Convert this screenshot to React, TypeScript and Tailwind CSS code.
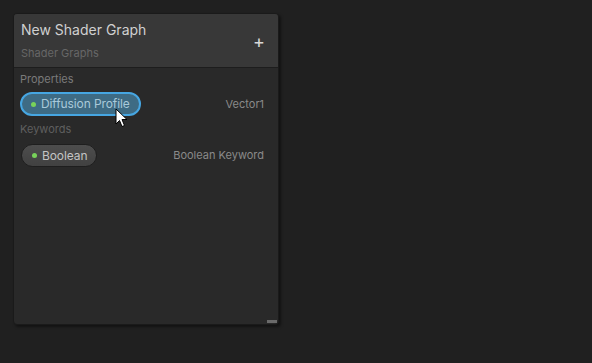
import React from "react";

const font = { fontFamily: "Inter, 'Noto Sans', sans-serif" };

function Pill({ label, selected }: { label: string; selected?: boolean }) {
  return (
    <div
      className={
        selected
          ? "flex h-[24px] items-center gap-[5px] rounded-full border-2 border-[#46a6e2] bg-[#3e6b84] pl-[9px] pr-[9px] text-[12px] tracking-[-0.1px] text-[#a9c9da]"
          : "flex h-[23px] items-center gap-[5px] rounded-full border border-[#1e1e1e] bg-gradient-to-b from-[#4d4d4d] to-[#414141] pl-[10px] pr-[9px] text-[12px] tracking-[-0.1px] text-[#c4c4c4]"
      }
    >
      <span className="h-[5px] w-[5px] rounded-full bg-[#78d25a]" />
      <span>{label}</span>
    </div>
  );
}

export default function App() {
  return (
    <div className="relative h-[363px] w-[592px] bg-[#202020] pl-[13px] pt-[13px]" style={font}>
      <div className="flex h-[312px] w-[266px] flex-col overflow-hidden rounded-[4px] border border-[#1a1a1a] bg-[#292929] shadow-[2px_2px_3px_rgba(0,0,0,0.45)]">
        {/* Header */}
        <div className="flex h-[54px] items-start justify-between border-b border-[#1d1d1d] bg-[#383838] pl-[7px] pr-[13px] pt-[6px]">
          <div className="flex flex-col">
            <span className="text-[14px] leading-[20px] text-[#d0d0d0]">New Shader Graph</span>
            <span className="mt-[6px] text-[11px] leading-[14px] text-[#676767]">Shader Graphs</span>
          </div>
          <span className="mt-[13px] text-[18px] leading-none text-[#d8d8d8]">+</span>
        </div>

        {/* Body */}
        <div className="flex flex-1 flex-col pl-[6px] pr-[14px]">
          <span className="mt-[4px] text-[11px] leading-[14px] text-[#7a7a7a]">Properties</span>
          <div className="mt-[6px] flex items-center justify-between">
            <Pill label="Diffusion Profile" selected />
            <span className="text-[11px] text-[#8a8a8a]">Vector1</span>
          </div>
          <span className="mt-[6px] text-[11px] leading-[14px] text-[#5f5f5f]">Keywords</span>
          <div className="mt-[8px] flex items-center justify-between pl-[1px]">
            <Pill label="Boolean" />
            <span className="text-[11px] text-[#8a8a8a]">Boolean Keyword</span>
          </div>
          <div className="flex-1" />
          <div className="mb-[1px] flex justify-end">
            <div className="-mr-[13px] h-[3px] w-[10px] bg-[#6a6a6a]" />
          </div>
        </div>
      </div>

      {/* Mouse cursor */}
      <svg className="absolute left-[115px] top-[108px]" width="14" height="21" viewBox="0 0 14 21">
        <path d="M1 1 L1 16 L4.5 12.5 L7 18.5 L9.5 17.5 L7 11.5 L12 11.5 Z" fill="#ffffff" stroke="#000000" strokeWidth="1" />
      </svg>
    </div>
  );
}
